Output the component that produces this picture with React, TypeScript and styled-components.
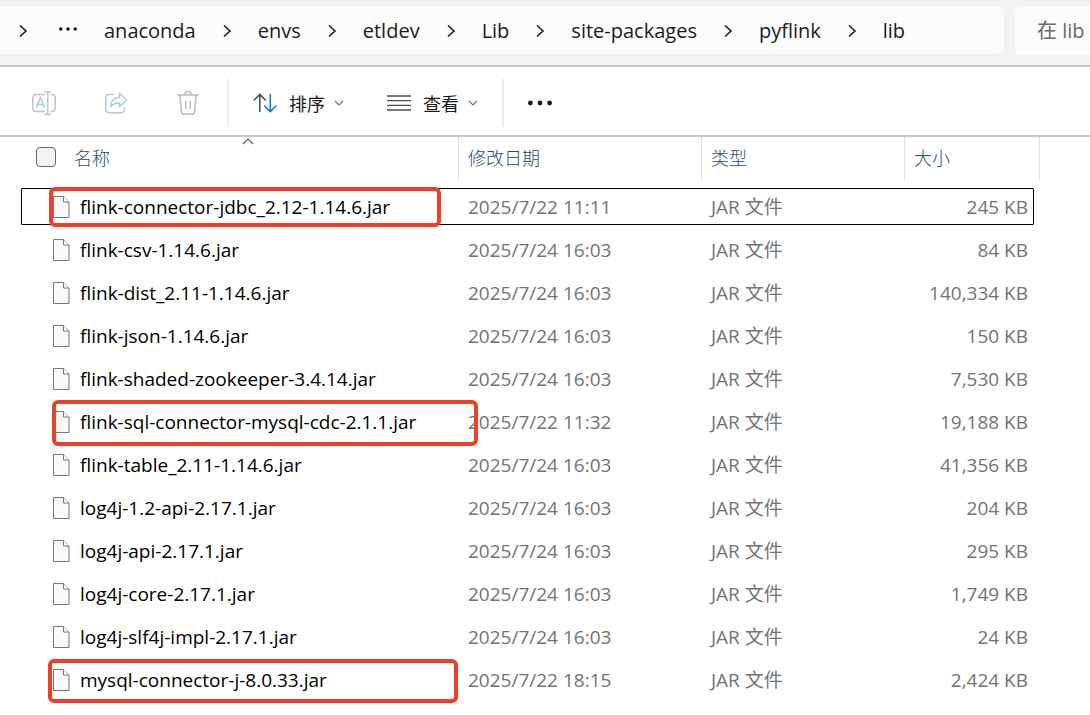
import React from "react";
import styled, { createGlobalStyle, css } from "styled-components";

const GlobalStyle = createGlobalStyle`
  *, *::before, *::after { box-sizing: border-box; }
  body {
    margin: 0;
    background: #ffffff;
    font-family: "Noto Sans", "Noto Sans CJK SC", sans-serif;
    overflow-x: hidden;
  }
  button, input { font-family: inherit; }
`;

const latin = css`
  font-family: "Open Sans", "Noto Sans CJK SC", sans-serif;
`;

const Page = styled.div`
  min-height: 100vh;
  background: #ffffff;
`;

const AddressRow = styled.header`
  display: flex;
  align-items: center;
  gap: 11px;
  height: 67px;
  padding-bottom: 5px;
  background: #f3f3f4;
  border-bottom: 2px solid #c8c7cf;
`;

const AddressBar = styled.nav`
  flex: 1;
  display: flex;
  align-items: center;
  min-width: 0;
  height: 48px;
  padding: 2px 0 0 18px;
  background: #fcfcfc;
  border-radius: 0 6px 6px 0;
`;

const Crumbs = styled.ol`
  display: flex;
  align-items: center;
  margin: 0;
  padding: 0;
  list-style: none;
`;

const Crumb = styled.li`
  display: flex;
  align-items: center;
`;

const CrumbLink = styled.a`
  ${latin}
  margin: 0 26px;
  font-size: 20px;
  line-height: 28px;
  color: #1b1b1b;
  text-decoration: none;
  white-space: nowrap;
`;

const MoreCrumbs = styled.button`
  display: flex;
  margin: 0 1px 5px 31px;
  padding: 0;
  border: 0;
  background: none;
`;

const SearchBox = styled.input`
  ${latin}
  width: 75px;
  height: 49px;
  padding: 0 0 0 22px;
  border: 0;
  border-radius: 6px 0 0 6px;
  background: #fcfcfc;
  font-size: 20px;
  color: #1b1b1b;
  outline: none;
  &::placeholder { color: #6a6a6a; opacity: 1; }
`;

const Toolbar = styled.div`
  display: flex;
  align-items: center;
  height: 70px;
  padding: 4px 0 0 20px;
  border-bottom: 2px solid #c8c7cf;
`;

const IconButton = styled.button`
  display: flex;
  align-items: center;
  justify-content: center;
  width: 48px;
  height: 48px;
  margin-right: 24px;
  padding: 0;
  border: 0;
  background: none;
`;

const MenuButton = styled.button`
  display: flex;
  align-items: center;
  height: 48px;
  padding: 0 0 0 24px;
  border: 0;
  background: none;
  color: #1b1b1b;
`;

const MenuLabel = styled.span`
  margin: 0 9px 0 12px;
  font-family: "Noto Sans CJK SC", sans-serif;
  font-size: 18px;
  font-weight: 400;
  line-height: 24px;
`;

const MenuGroup = styled.div`
  display: flex;
  gap: 19px;
  margin-left: -9px;
  padding-right: 24px;
  border-left: 2px solid #ededed;
  border-right: 2px solid #ededed;
`;

const FileTable = styled.table`
  width: calc(100% - 50px);
  table-layout: fixed;
  border-collapse: collapse;
`;

const Col = styled.col<{ $width?: number }>`
  ${({ $width }) => $width && `width: ${$width}px;`}
`;

const HeadCell = styled.th`
  position: relative;
  height: 49px;
  padding: 0 0 6px;
  text-align: left;
  font-weight: 300;
`;

const HeadContent = styled.div<{ $indent: number }>`
  display: flex;
  align-items: center;
  height: 43px;
  padding: 0 0 4px ${({ $indent }) => $indent}px;
  border-right: 1px solid #e2e2e2;
`;

const HeadButton = styled.button`
  padding: 0;
  border: 0;
  background: none;
  font-family: "Noto Sans CJK SC", sans-serif;
  font-size: 18px;
  font-weight: 300;
  line-height: 24px;
  color: #2c4a72;
`;

const SelectAll = styled.input`
  appearance: none;
  width: 20px;
  height: 20px;
  margin: 0 18px 0 0;
  border: 1px solid #666666;
  border-radius: 4px;
  background: #f3f3f3;
`;

const SortMark = styled.svg`
  position: absolute;
  top: 1px;
  left: 242px;
`;

const Row = styled.tr`
  position: relative;
  height: 43px;
`;

const FocusFrame = styled.div`
  position: absolute;
  inset: 2px 6px 4px 21px;
  border: 1px solid #000000;
  border-radius: 1px;
  pointer-events: none;
`;

const Cell = styled.td<{ $right?: boolean }>`
  ${latin}
  padding: 0 ${({ $right }) => ($right ? 12 : 0)}px 2px 9px;
  font-size: 19px;
  line-height: 28px;
  color: #737373;
  white-space: nowrap;
  text-align: ${({ $right }) => ($right ? "right" : "left")};
`;

const NameCell = styled.td`
  padding: 0 0 2px 52px;
`;

const FileName = styled.div`
  ${latin}
  display: flex;
  align-items: center;
  gap: 10px;
  font-size: 19px;
  line-height: 28px;
  color: #000000;
  white-space: nowrap;
`;

type Box = { left: number; top: number; width: number; height: number };

const Highlight = styled.div<{ $box: Box }>`
  position: absolute;
  z-index: 2;
  left: ${({ $box }) => $box.left}px;
  top: ${({ $box }) => $box.top}px;
  width: ${({ $box }) => $box.width}px;
  height: ${({ $box }) => $box.height}px;
  border: 4px solid #ee4027;
  border-radius: 6px;
  pointer-events: none;
`;

const ChevronRight = () => (
  <svg width="10" height="14" viewBox="0 0 10 14" fill="none" stroke="#1b1b1b" strokeWidth="1.6" aria-hidden="true">
    <path d="M2 1.5 8 7 2 12.5" />
  </svg>
);

const ChevronDown = () => (
  <svg width="10" height="6" viewBox="0 0 10 6" fill="none" stroke="#707070" strokeWidth="1.1" aria-hidden="true">
    <path d="M1 1 5 5 9 1" />
  </svg>
);

const Dots = ({ width, r }: { width: number; r: number }) => (
  <svg width={width} height="6" viewBox={`0 0 ${width} 6`} fill="#1b1b1b" aria-hidden="true">
    <circle cx={r} cy="3" r={r} />
    <circle cx={width / 2} cy="3" r={r} />
    <circle cx={width - r} cy="3" r={r} />
  </svg>
);

const RenameIcon = () => (
  <svg width="24" height="24" viewBox="0 0 24 24" fill="none" strokeWidth="1.5" aria-hidden="true">
    <path stroke="#c4c4c4" d="M13 3.5H4.2A3.4 3.4 0 0 0 .8 6.9V17.1a3.4 3.4 0 0 0 3.4 3.4H13M18.5 3.5h1.3a3.4 3.4 0 0 1 3.4 3.4v10.2a3.4 3.4 0 0 1-3.4 3.4h-1.3" />
    <path stroke="#a0cdf2" d="M12.5.8h6.5M12.5 23.2h6.5M15.75.8v22.4M4.2 16.600 8.400 6.600l4.200 10M5.600 13.500h5.600" />
  </svg>
);

const ShareIcon = () => (
  <svg width="24" height="24" viewBox="0 0 24 24" fill="none" strokeWidth="1.5" strokeLinejoin="round" strokeLinecap="round" aria-hidden="true">
    <path stroke="#c4c4c4" d="M9.5 3.500H5A3.300 3.300 0 0 0 1.700 6.800v11.700A3.300 3.300 0 0 0 5 21.800h12.200a3.300 3.300 0 0 0 3.300-3.300V17" />
    <path stroke="#a0cdf2" d="M15.500 2.300 22.700 9l-7.200 6.700v-3.800c-4.300-.1-6.900 1-9.300 3.800.5-5.500 4-9.100 9.300-9.500Z" />
  </svg>
);

const TrashIcon = () => (
  <svg width="24" height="24" viewBox="0 0 24 24" fill="none" stroke="#bdbdbd" strokeWidth="1.5" strokeLinecap="round" aria-hidden="true">
    <path d="M1.800 4h20.400M8.700 3.800a3.300 3.300 0 0 1 6.600 0M3.700 4l1.900 16.800a2.500 2.500 0 0 0 2.500 2.200h7.800a2.500 2.500 0 0 0 2.500-2.200L20.300 4M9.800 10v7.500M14.200 10v7.500" />
  </svg>
);

const SortIcon = () => (
  <svg width="24" height="20" viewBox="0 0 24 20" fill="none" strokeWidth="1.5" aria-hidden="true">
    <path stroke="#4a4a4a" d="M6.800 19V1.500M.7 7.500 6.800 1.400l6.100 6.100" />
    <path stroke="#0a7bd6" d="M17.300 1v17.500M11.200 12.500l6.100 6.100 6.100-6.100" />
  </svg>
);

const ViewIcon = () => (
  <svg width="24" height="16" viewBox="0 0 24 16" fill="none" stroke="#4d4d4d" strokeWidth="1.3" aria-hidden="true">
    <path d="M0 1h24M0 5.700h24M0 10.300h24M0 15h24" />
  </svg>
);

const FileIconSvg = styled.svg`
  flex: none;
`;

const FileIcon = () => (
  <FileIconSvg width="18" height="22" viewBox="0 0 18 22" fill="#f9f9f9" stroke="#777777" aria-hidden="true">
    <path d="M1.500.5h10l5.500 5.500v15.500h-15.500Z" />
    <path fill="#ffffff" d="M11.500.5v5.500h5.500" />
  </FileIconSvg>
);

const crumbs = ["anaconda", "envs", "etldev", "Lib", "site-packages", "pyflink", "lib"];

type FileEntry = { name: string; date: string; size: string; box?: Box };

const files: FileEntry[] = [
  { name: "flink-connector-jdbc_2.12-1.14.6.jar", date: "2025/7/22 11:11", size: "245 KB", box: { left: 49, top: 1, width: 392, height: 40 } },
  { name: "flink-csv-1.14.6.jar", date: "2025/7/24 16:03", size: "84 KB" },
  { name: "flink-dist_2.11-1.14.6.jar", date: "2025/7/24 16:03", size: "140,334 KB" },
  { name: "flink-json-1.14.6.jar", date: "2025/7/24 16:03", size: "150 KB" },
  { name: "flink-shaded-zookeeper-3.4.14.jar", date: "2025/7/24 16:03", size: "7,530 KB" },
  { name: "flink-sql-connector-mysql-cdc-2.1.1.jar", date: "2025/7/22 11:32", size: "19,188 KB", box: { left: 52, top: -1, width: 426, height: 46 } },
  { name: "flink-table_2.11-1.14.6.jar", date: "2025/7/24 16:03", size: "41,356 KB" },
  { name: "log4j-1.2-api-2.17.1.jar", date: "2025/7/24 16:03", size: "204 KB" },
  { name: "log4j-api-2.17.1.jar", date: "2025/7/24 16:03", size: "295 KB" },
  { name: "log4j-core-2.17.1.jar", date: "2025/7/24 16:03", size: "1,749 KB" },
  { name: "log4j-slf4j-impl-2.17.1.jar", date: "2025/7/24 16:03", size: "24 KB" },
  { name: "mysql-connector-j-8.0.33.jar", date: "2025/7/22 18:15", size: "2,424 KB", box: { left: 48, top: 0, width: 410, height: 44 } },
];

export default function App() {
  return (
    <Page>
      <GlobalStyle />
      <AddressRow>
        <AddressBar>
          <ChevronRight />
          <MoreCrumbs type="button" aria-label="More folders">
            <Dots width={18} r={1.8} />
          </MoreCrumbs>
          <Crumbs>
            {crumbs.map((name, i) => (
              <Crumb key={name}>
                {i > 0 && <ChevronRight />}
                <CrumbLink href="#">{name}</CrumbLink>
              </Crumb>
            ))}
          </Crumbs>
        </AddressBar>
        <SearchBox type="text" aria-label="Search" placeholder="在 lib" />
      </AddressRow>

      <Toolbar>
        <IconButton type="button" aria-label="Rename"><RenameIcon /></IconButton>
        <IconButton type="button" aria-label="Share"><ShareIcon /></IconButton>
        <IconButton type="button" aria-label="Delete"><TrashIcon /></IconButton>
        <MenuGroup>
          <MenuButton type="button"><SortIcon /><MenuLabel>排序</MenuLabel><ChevronDown /></MenuButton>
          <MenuButton type="button"><ViewIcon /><MenuLabel>查看</MenuLabel><ChevronDown /></MenuButton>
        </MenuGroup>
        <MenuButton type="button" aria-label="More"><Dots width={24} r={2.4} /></MenuButton>
      </Toolbar>

      <FileTable>
        <colgroup>
          <Col />
          <Col $width={243} />
          <Col $width={203} />
          <Col $width={135} />
        </colgroup>
        <thead>
          <tr>
            <HeadCell>
              <SortMark width="12" height="7" viewBox="0 0 12 7" fill="none" stroke="#5a5a5a" strokeWidth="1.1" aria-hidden="true">
                <path d="M1 6 6 1l5 5" />
              </SortMark>
              <HeadContent $indent={36}>
                <SelectAll type="checkbox" aria-label="Select all" />
                <HeadButton type="button">名称</HeadButton>
              </HeadContent>
            </HeadCell>
            {["修改日期", "类型", "大小"].map((label) => (
              <HeadCell key={label}>
                <HeadContent $indent={9}><HeadButton type="button">{label}</HeadButton></HeadContent>
              </HeadCell>
            ))}
          </tr>
        </thead>
        <tbody>
          {files.map((file, i) => (
            <Row key={file.name}>
              <NameCell>
                <FileName><FileIcon />{file.name}</FileName>
                {i === 0 && <FocusFrame />}
                {file.box && <Highlight $box={file.box} />}
              </NameCell>
              <Cell>{file.date}</Cell>
              <Cell>JAR 文件</Cell>
              <Cell $right>{file.size}</Cell>
            </Row>
          ))}
        </tbody>
      </FileTable>
    </Page>
  );
}
